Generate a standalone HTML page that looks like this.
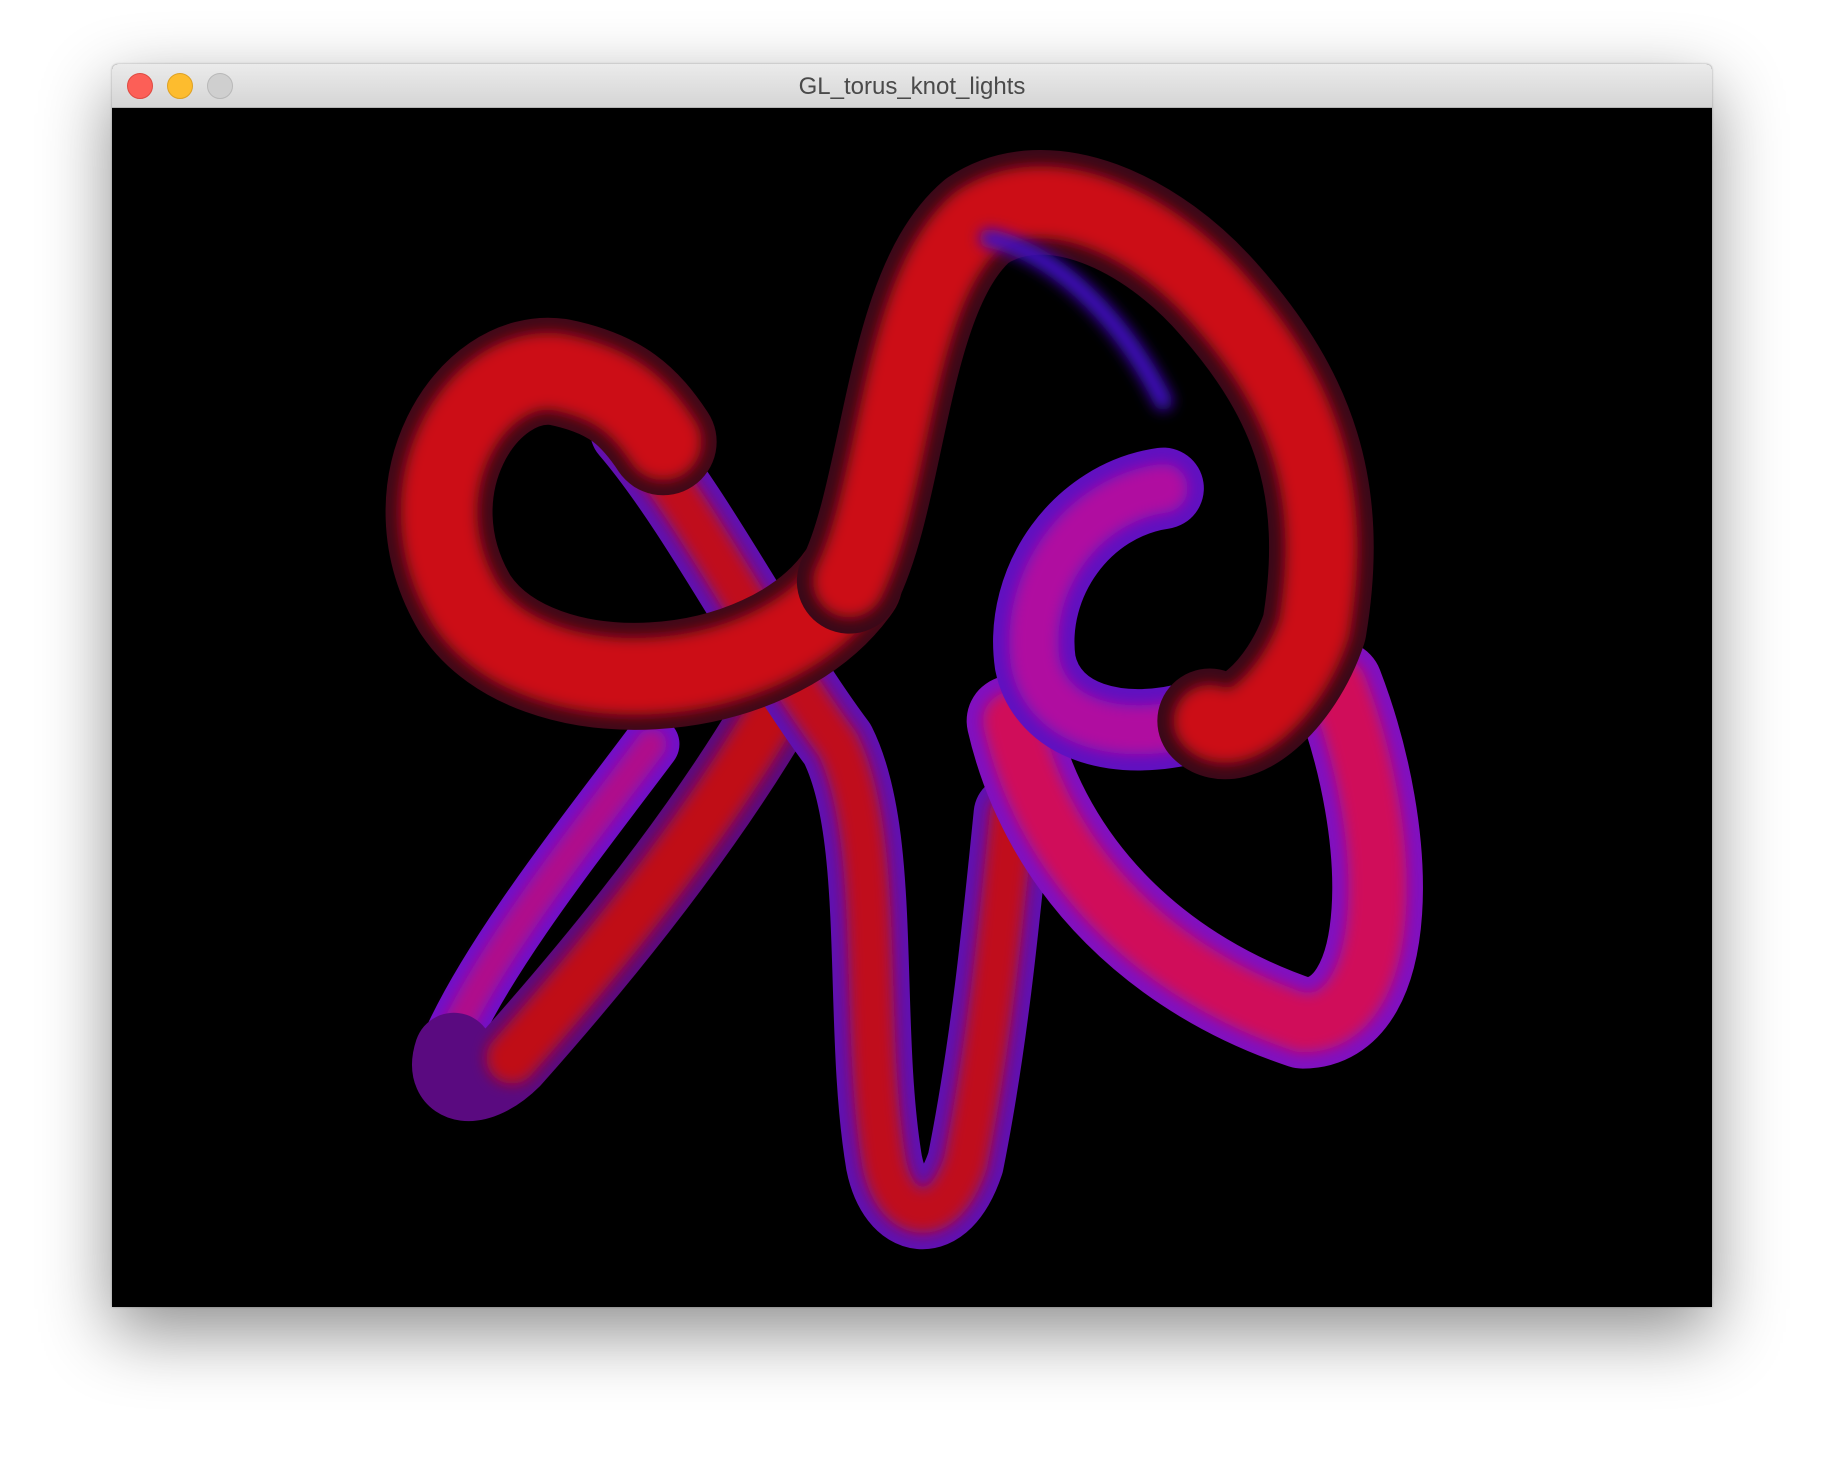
<!DOCTYPE html>
<html><head><meta charset="utf-8"><style>
html,body{margin:0;padding:0;background:#fff;width:1824px;height:1468px;overflow:hidden}
.win{position:absolute;left:112px;top:64px;width:1600px;height:1243px;box-shadow:0 25px 70px rgba(0,0,0,.45),0 0 2px rgba(0,0,0,.3);border-radius:6px 6px 0 0;overflow:hidden;background:#000}
.tb{position:absolute;left:0;top:0;width:100%;height:44px;background:linear-gradient(#ebebeb,#d5d5d5);border-bottom:1px solid #b5b5b5;box-sizing:border-box}
.tb .t{position:absolute;left:0;right:0;top:9px;text-align:center;font:24px "Liberation Sans",sans-serif;color:#4a4a4a}
.d{position:absolute;top:9px;width:24px;height:24px;border-radius:50%}
svg{position:absolute;left:0;top:44px}
</style></head><body>
<div class="win">
<div class="tb"><div class="d" style="left:15px;background:#fc5f57;border:1px solid #de4a41"></div><div class="d" style="left:55px;background:#fdbc2e;border:1px solid #dea123"></div><div class="d" style="left:95px;background:#cfcfcf;border:1px solid #b8b8b8"></div><div class="t">GL_torus_knot_lights</div></div>
<svg width="1600" height="1199" viewBox="96 93 1376 1031" preserveAspectRatio="none">
<defs><filter id="b" filterUnits="userSpaceOnUse" x="0" y="0" width="1600" height="1300"><feGaussianBlur stdDeviation="6"/></filter></defs>
<g fill="none" stroke-linecap="round" stroke-linejoin="round">
<g>
<path d="M560 640 C500 720 420 820 385 900" stroke="#7010c8" stroke-width="48"/>
<path d="M560 640 C500 720 420 820 385 900" stroke="#b0108a" stroke-width="26" filter="url(#b)"/>
<path d="M660 620 C600 720 520 820 440 910 C410 940 380 935 390 905" stroke="#5a0a80" stroke-width="68"/>
<path d="M660 620 C600 720 520 820 440 910" stroke="#c00c18" stroke-width="44" filter="url(#b)"/>
</g>
<path d="M540 370 C600 440 660 560 720 640 C760 720 740 880 760 1000 C770 1050 810 1060 830 1000 C850 900 860 800 870 700" stroke="#6010b0" stroke-width="66"/>
<path d="M540 370 C600 440 660 560 720 640 C760 720 740 880 760 1000 C770 1050 810 1060 830 1000 C850 900 860 800 870 700" stroke="#c00c1c" stroke-width="38" filter="url(#b)"/>
<path d="M870 620 C900 750 1000 840 1120 880 C1200 880 1200 720 1150 590" stroke="#8010c0" stroke-width="78"/>
<path d="M870 620 C900 750 1000 840 1120 880 C1200 880 1200 720 1150 590" stroke="#d0105a" stroke-width="50" filter="url(#b)"/>
<path d="M1000 420 C930 430 880 500 890 570 C900 620 960 640 1030 620" stroke="#6010c0" stroke-width="70"/>
<path d="M1000 420 C930 430 880 500 890 570 C900 620 960 640 1030 620" stroke="#b010a0" stroke-width="42" filter="url(#b)"/>
<path d="M730 500 C660 600 460 610 400 520 C340 420 410 310 480 320 C530 330 550 350 570 380" stroke="#400818" stroke-width="92"/>
<path d="M730 500 C660 600 460 610 400 520 C340 420 410 310 480 320 C530 330 550 350 570 380" stroke="#cc0c14" stroke-width="66" filter="url(#b)"/>
<path d="M730 500 C770 420 770 250 840 190 C900 150 990 190 1050 260 C1120 340 1150 420 1130 540 C1110 600 1060 640 1040 620" stroke="#3a0818" stroke-width="90"/>
<path d="M730 500 C770 420 770 250 840 190 C900 150 990 190 1050 260 C1120 340 1150 420 1130 540 C1110 600 1060 640 1040 620" stroke="#cc0c18" stroke-width="62" filter="url(#b)"/>
<path d="M850 205 C900 215 960 265 1000 345" stroke="#4010c0" stroke-width="16" filter="url(#b)"/>
</g>
</svg>
</div>
</body></html>
